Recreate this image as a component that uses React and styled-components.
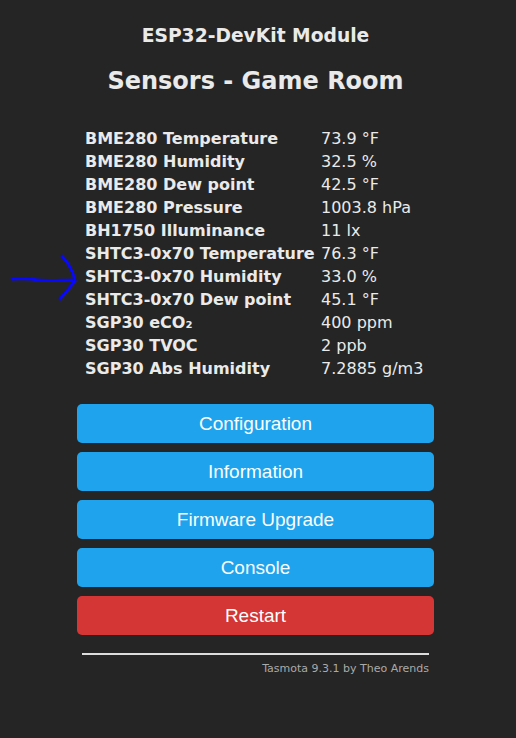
import styled, { createGlobalStyle } from "styled-components";

const GlobalStyle = createGlobalStyle`
  html, body {
    margin: 0;
    padding: 0;
    background: #252525;
  }
  body {
    color: #eaeaea;
    font-family: "DejaVu Sans", Verdana, sans-serif;
  }
`;

const sensors = [
  ["BME280 Temperature", "73.9 °F"],
  ["BME280 Humidity", "32.5 %"],
  ["BME280 Dew point", "42.5 °F"],
  ["BME280 Pressure", "1003.8 hPa"],
  ["BH1750 Illuminance", "11 lx"],
  ["SHTC3-0x70 Temperature", "76.3 °F"],
  ["SHTC3-0x70 Humidity", "33.0 %"],
  ["SHTC3-0x70 Dew point", "45.1 °F"],
  ["SGP30 eCO₂", "400 ppm"],
  ["SGP30 TVOC", "2 ppb"],
  ["SGP30 Abs Humidity", "7.2885 g/m3"],
];

const buttons = [
  { label: "Configuration" },
  { label: "Information" },
  { label: "Firmware Upgrade" },
  { label: "Console" },
  { label: "Restart", danger: true },
];

export default function App() {
  return (
    <Page>
      <GlobalStyle />
      <Arrow width="90" height="70" viewBox="0 0 90 70">
        <path d="M12 29 C20 29 30 28 38 30 C48 31 62 30 75 30" />
        <path d="M62 6 C67 12 72 18 75 30" />
        <path d="M60 49 C65 43 70 37 75 31" />
      </Arrow>
      <Container>
        <ModuleName>ESP32-DevKit Module</ModuleName>
        <DeviceName>Sensors - Game Room</DeviceName>
        <SensorTable>
          {sensors.map(([name, value]) => (
            <Row key={name}>
              <Label>{name}</Label>
              <Value>{value}</Value>
            </Row>
          ))}
        </SensorTable>
        <Buttons>
          {buttons.map((b) => (
            <Button key={b.label} $danger={b.danger}>
              {b.label}
            </Button>
          ))}
        </Buttons>
        <Rule />
        <Footer>Tasmota 9.3.1 by Theo Arends</Footer>
      </Container>
    </Page>
  );
}

const Page = styled.div`
  position: relative;
  min-height: 738px;
  display: flex;
  justify-content: center;
  padding-right: 5px;
  box-sizing: border-box;
`;

const Arrow = styled.svg`
  position: absolute;
  left: 0;
  top: 250px;
  fill: none;
  stroke: #0808ff;
  stroke-width: 2.8;
  stroke-linecap: round;
  stroke-linejoin: round;
`;

const Container = styled.div`
  width: 357px;
  display: flex;
  flex-direction: column;
  padding-top: 25px;
`;

const ModuleName = styled.h3`
  margin: 0;
  height: 22px;
  line-height: 22px;
  font-size: 18.7px;
  font-weight: bold;
  text-align: center;
`;

const DeviceName = styled.h2`
  margin: 20px 0 0;
  height: 28px;
  line-height: 28px;
  font-size: 24px;
  font-weight: bold;
  text-align: center;
`;

const SensorTable = styled.div`
  margin-top: 32px;
  padding-left: 8px;
  display: grid;
  grid-template-columns: 236px 1fr;
`;

const Row = styled.div`
  display: contents;
`;

const Cell = styled.div`
  height: 23px;
  line-height: 23px;
  font-size: 16px;
  white-space: nowrap;
`;

const Label = styled(Cell)`
  font-weight: bold;
`;

const Value = styled(Cell)`
  font-weight: normal;
`;

const Buttons = styled.div`
  margin-top: 24px;
  display: flex;
  flex-direction: column;
  gap: 9px;
`;

const Button = styled.button`
  height: 39px;
  border: 0;
  border-radius: 5px;
  background: ${(p) => (p.$danger ? "#d43535" : "#1fa3ec")};
  color: #faffff;
  font-family: "Liberation Sans", Arial, sans-serif;
  font-size: 19px;
  cursor: pointer;
`;

const Rule = styled.hr`
  margin: 18px 5px 0;
  border: 0;
  border-top: 2px solid #dddddd;
`;

const Footer = styled.div`
  margin: 6px 5px 0 0;
  text-align: right;
  font-size: 11px;
  line-height: 16px;
  color: #aaaaaa;
`;
